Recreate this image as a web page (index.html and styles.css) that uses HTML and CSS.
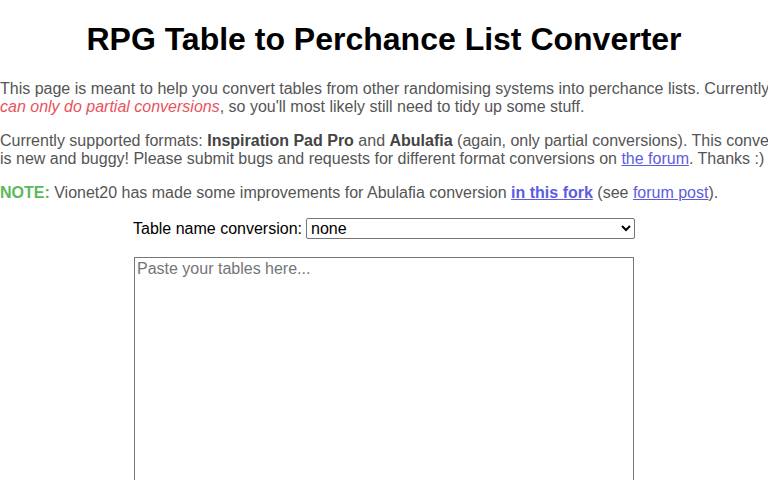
FILE: index.html
```html
<!DOCTYPE html>
<html lang="en">
<head>
<meta charset="utf-8">
<title>RPG Table to Perchance List Converter</title>
<link rel="stylesheet" href="styles.css">
</head>
<body>
<div class="page">
  <h1 class="title">RPG Table to Perchance List Converter</h1>
  <div class="intro">
    <p>This page is meant to help you convert tables from other randomising systems into perchance lists. Currently I <em class="warn">can only do partial conversions</em>, so you'll most likely still need to tidy up some stuff.</p>
    <p>Currently supported formats: <b>Inspiration Pad Pro</b> and <b>Abulafia</b> (again, only partial conversions). This converter is new and buggy! Please submit bugs and requests for different format conversions on <a href="#">the forum</a>. Thanks :)</p>
    <p><b class="note">NOTE:</b> Vionet20 has made some improvements for Abulafia conversion <a href="#"><b>in this fork</b></a> (see <a href="#">forum post</a>).</p>
  </div>
  <div class="options">
    <label class="opt-label" for="conv">Table name conversion:</label>
    <select id="conv" class="opt-select">
      <option>none</option>
    </select>
  </div>
  <textarea class="input" placeholder="Paste your tables here..."></textarea>
</div>
</body>
</html>
```

FILE: styles.css
```css
html, body {
  margin: 0;
  padding: 0;
  overflow: hidden;
  background: #fff;
}
.page {
  width: 768px;
  overflow: hidden;
  font-family: "Liberation Sans", Arial, sans-serif;
  font-size: 16px;
  color: #555;
}
.title {
  margin: 21px 0 22px;
  font-size: 32px;
  line-height: 37px;
  font-weight: bold;
  text-align: center;
  color: #000;
}
.intro {
  width: 800px;
}
.intro p {
  margin: 16px 0;
  line-height: 18px;
}
.intro p:first-child {
  margin-top: 0;
}
.warn {
  color: #e8535e;
}
b {
  color: #444;
}
.note {
  color: #5cb85c;
}
a {
  color: #5c5ce0;
}
a b {
  color: #5c5ce0;
}
.options {
  width: 502px;
  margin: 16px auto 0;
  display: flex;
  align-items: center;
  gap: 4px;
}
.opt-label {
  color: #000;
  white-space: nowrap;
}
.opt-select {
  flex: 1;
  height: 21px;
  font-family: "Liberation Sans", Arial, sans-serif;
  font-size: 16px;
  color: #000;
  background: #fff;
  border: 1px solid #767676;
  border-radius: 2px;
}
.input {
  display: block;
  box-sizing: border-box;
  width: 500px;
  height: 400px;
  margin: 18px auto 0;
  padding: 2px;
  font-family: "Liberation Sans", Arial, sans-serif;
  font-size: 16px;
  border: 1px solid #767676;
  resize: vertical;
}
.input::placeholder {
  color: #757575;
}
```
